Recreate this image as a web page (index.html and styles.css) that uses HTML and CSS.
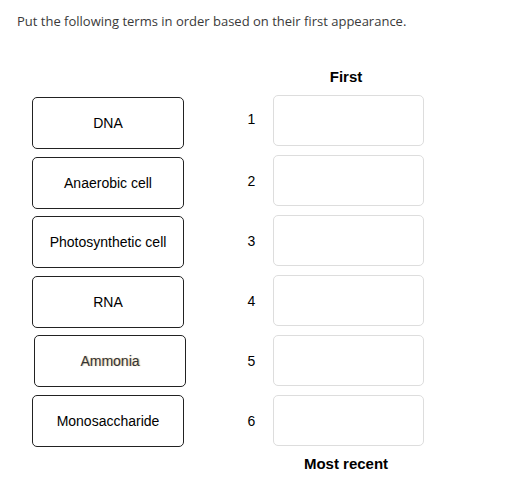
FILE: index.html
```html
<!DOCTYPE html>
<html lang="en">
<head>
  <meta charset="UTF-8" />
  <meta name="viewport" content="width=device-width, initial-scale=1" />
  <title>Ordering question</title>
  <link rel="stylesheet" href="styles.css">
</head>
<body>
  <p class="prompt">Put the following terms in order based on their first appearance.</p>

  <div class="board">
    <!-- Draggable terms -->
    <div class="terms">
      <div class="term">DNA</div>
      <div class="term">Anaerobic cell</div>
      <div class="term">Photosynthetic cell</div>
      <div class="term">RNA</div>
      <div class="term dragging">Ammonia</div>
      <div class="term">Monosaccharide</div>
    </div>

    <!-- Drop targets, numbered -->
    <div class="slots">
      <div class="slots-label">First</div>
      <div class="slot-row"><span class="slot-num first">1</span><div class="slot"></div></div>
      <div class="slot-row"><span class="slot-num">2</span><div class="slot"></div></div>
      <div class="slot-row"><span class="slot-num">3</span><div class="slot"></div></div>
      <div class="slot-row"><span class="slot-num">4</span><div class="slot"></div></div>
      <div class="slot-row"><span class="slot-num">5</span><div class="slot"></div></div>
      <div class="slot-row"><span class="slot-num">6</span><div class="slot"></div></div>
      <div class="slots-label">Most recent</div>
    </div>
  </div>
</body>
</html>
```

FILE: styles.css
```css
/* Reset and base */
* {
  box-sizing: border-box;
  margin: 0;
  padding: 0;
}
body {
  font-family: 'Liberation Sans', Arial, sans-serif;
  background: #fff;
  color: #000;
  padding: 12px 17px;
}

.prompt {
  font-family: 'Open Sans', 'Liberation Sans', sans-serif;
  font-size: 13px;
  color: #3a3a3a;
  line-height: 18px;
}

.board {
  display: flex;
  align-items: flex-start;
  margin-top: 38px;
  padding-left: 15px;
}

/* Terms column */
.terms {
  width: 152px;
  margin-top: 29px;
  display: flex;
  flex-direction: column;
  gap: 7.6px;
}
.term {
  height: 52px;
  border: 1px solid #222;
  border-radius: 5px;
  display: flex;
  align-items: center;
  justify-content: center;
  font-size: 14px;
  color: #000;
  background: #fff;
  cursor: grab;
  user-select: none;
}
.term.dragging {
  margin-left: 2px;
  margin-right: -2px;
  color: #333;
  text-shadow: 1px 0 1px rgba(150, 110, 40, 0.45);
}

/* Slots column */
.slots {
  margin-left: 47px;
  display: flex;
  flex-direction: column;
  gap: 9px;
}
.slots-label {
  font-weight: 700;
  font-size: 15px;
  text-align: center;
  padding-left: 37px;
  line-height: 18px;
}
.slot-row {
  display: flex;
  align-items: center;
}
.slot-num {
  width: 41px;
  text-align: center;
  font-size: 14px;
}
.slot-num.first {
  margin-top: -4px;
}
.slot {
  width: 151px;
  height: 51px;
  margin-left: 1px;
  border: 1px solid #ddd;
  border-radius: 5px;
}
```
